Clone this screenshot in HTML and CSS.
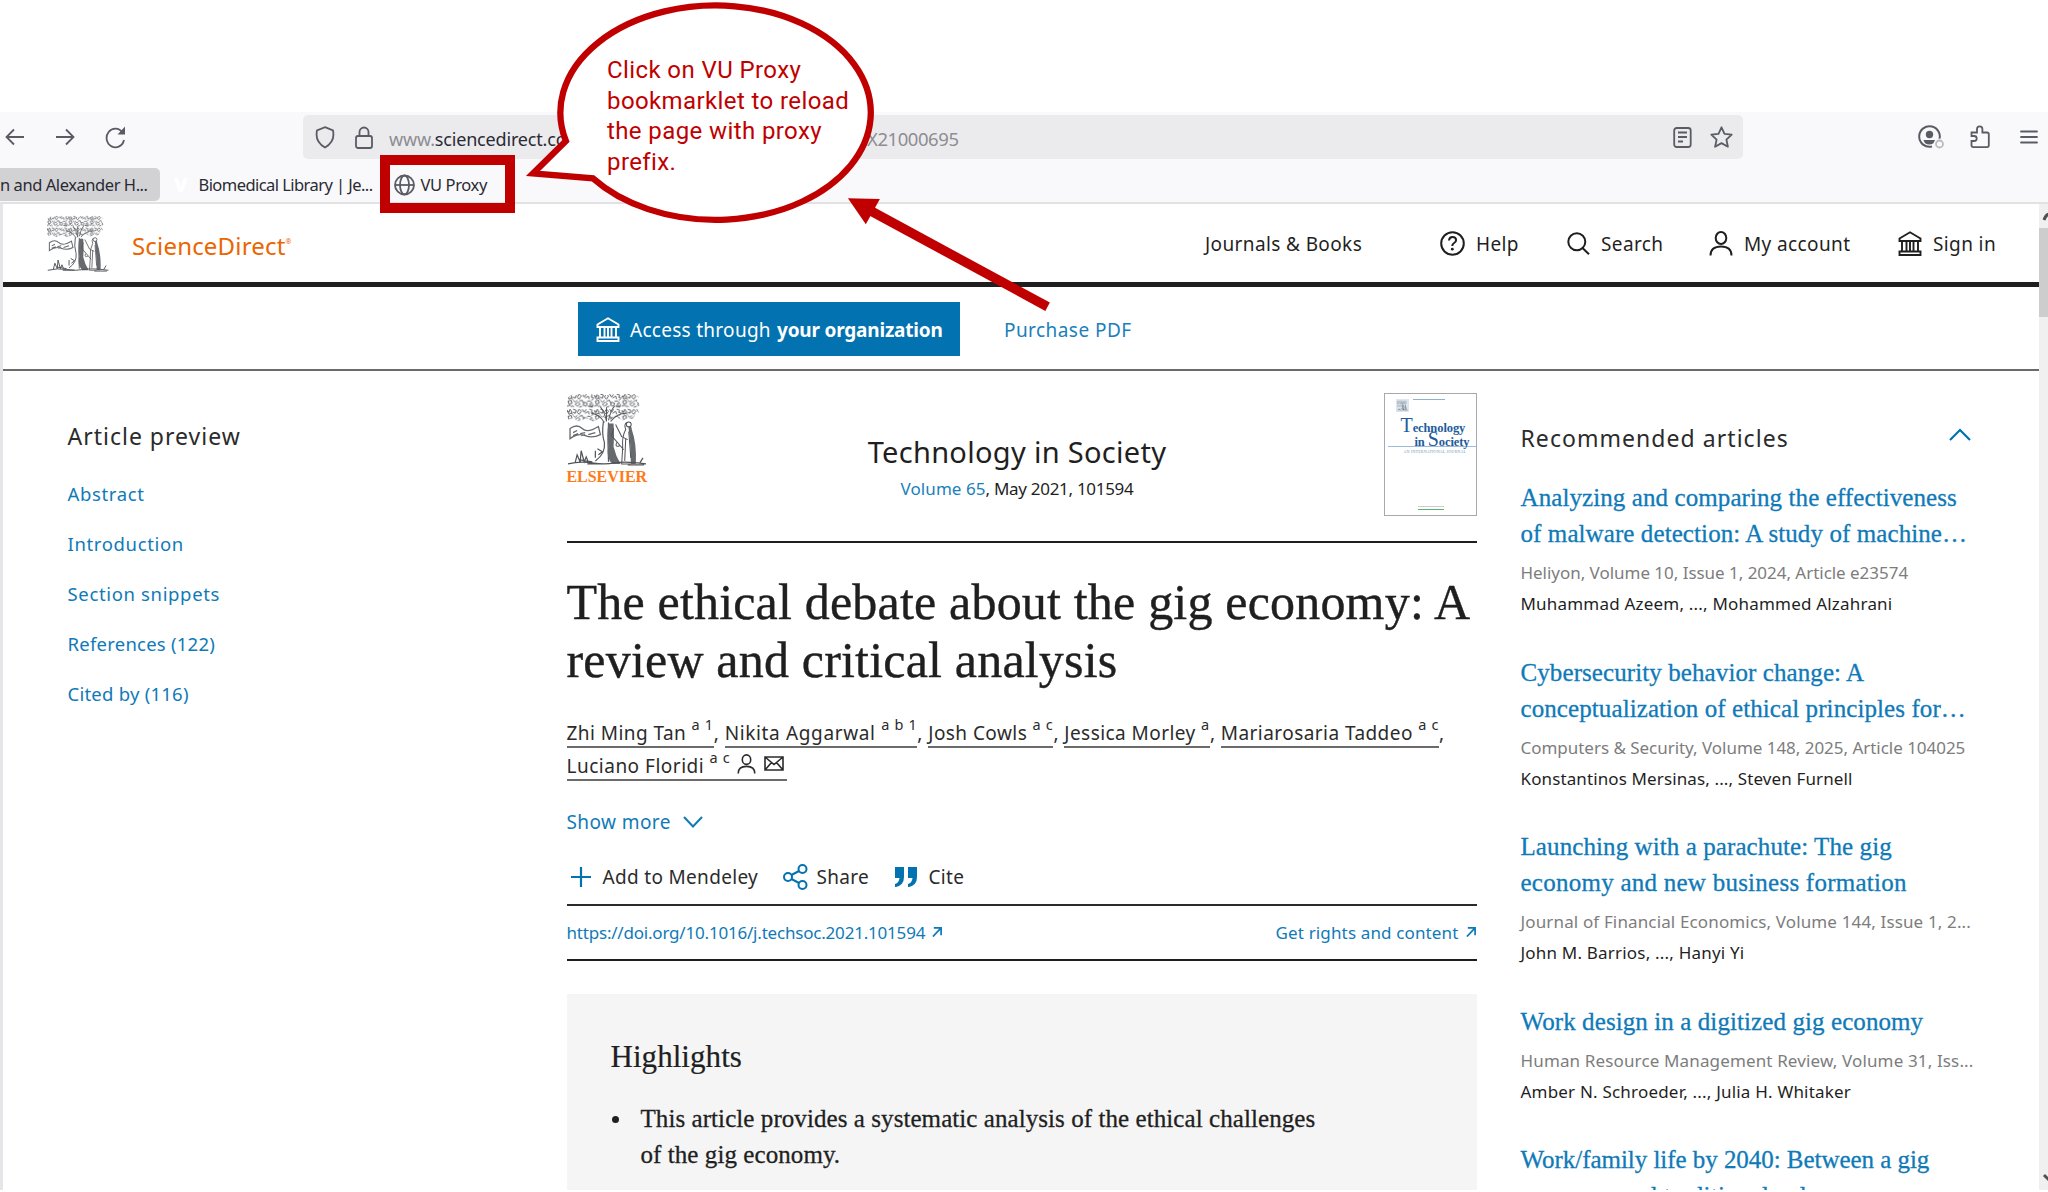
FILE: index.html
```html
<!DOCTYPE html>
<html lang="en">
<head>
<meta charset="utf-8">
<title>The ethical debate about the gig economy: A review and critical analysis</title>
<link rel="stylesheet" href="styles.css">
</head>
<body>
<svg class="defs" width="0" height="0" aria-hidden="true">
  <defs>
    <pattern id="leaves" width="27" height="15" patternUnits="userSpaceOnUse">
      <path d="M0 2l2 2 1-3 2 3-3 2zM6 1l3 1-1 3-2-1M10 4l2-3 2 2-2 3zM15 1l2 3 2-3M18 5l3-2 1 3M22 1l3 1-1 2 3 1M1 8l3-1 1 3-3 1zM6 7l2 2 2-2M8 11l3-2 2 2-3 2zM12 8l3-1 1 3M16 12l1-3 3 1-1 3zM20 8l3 0 2 2-3 1M24 7l2-1M0 13l3-1 2 2M5 12l2 2M12 14l3-1M21 13l3-1 1 2zM26 11l-1 3M4 5l2 1" fill="none" stroke="#505358" stroke-width=".9"/>
    </pattern>
    <symbol id="tree" viewBox="0 0 80 72">
      <path d="M2 4l3-3 3 2 3-3 4 2 4-2 3 3 4-3 5 2 4-2 4 3 4-3 4 2 4-2 3 3 5-3 4 2 4-1 4 3-2 4 3 3-2 4 1 5-4 2-2 4-5-1-5 2-6-3-6 2-9-2-8 4-7-3-7 3-6-3-8 2-6-3-1-4 2-4-3-5 3-3z" fill="url(#leaves)"/>
      <path d="M33 14q4 4 6 14M47 13q-4 4-6 14M24 20q8 1 13 9M58 20q-8 0-15 8M39 14v14" fill="none" stroke="#55585d" stroke-width="1"/>
      <path d="M3 35q7-5 12 0t16-2l2 8q-8 4-15 1T3 45zM6 39l4-2m3 3l5-1m3 2l7-2M6 42l5-2m3 2l4-1" fill="none" stroke="#66696e" stroke-width="1.300"/>
      <path d="M36 28q-2 12 1 21 1 11-9 18M41 29q-1 20 0 39" fill="none" stroke="#55585d" stroke-width="1.2"/>
      <path d="M41 30h5q1 12 0 23 2 9 7 17h-8q-7-6-4-18-2-11 0-22z" fill="#66696e"/>
      <path d="M60 30q4 2 4 6 5 14 4 34h-5q0-20-2-34z" fill="#66696e"/>
      <path d="M59 29q-3 2-1 7-4 7-3 18l-1 16h9M48 31l6 12 6 3M46 35l-2 7M61 38l2 26M58 45l-1 22M49 49q-2 5 3 3M44 42l12 14" fill="none" stroke="#505358" stroke-width="1"/>
      <circle cx="61" cy="31" r="2.4" fill="#fff" stroke="#505358"/>
      <path d="M1 70q12-3 24-1t22 0 31 1M8 69l2-8 3 7 1-11 3 11 2-5 2 5M30 55l5 3-4 3M72 69l3-5M28 57v7M13 66l12 2M20 70h15M60 71h16" fill="none" stroke="#505358" stroke-width="1.2"/>
    </symbol>
    <symbol id="bank" viewBox="0 0 24 25">
      <path d="M1.500 7.500L12 1.300l10.500 6.200V10H1.500zM4 10v10.500M20 10v10.500M8.500 10v10.500M12 10v10.500M15.500 10v10.500M1.500 24v-3.500h21V24z" fill="none" stroke="currentColor" stroke-width="1.900"/>
    </symbol>
    <symbol id="person" viewBox="0 0 24 25">
      <ellipse cx="12" cy="7" rx="5.300" ry="6" fill="none" stroke="currentColor" stroke-width="2"/>
      <path d="M1.500 24.500c0-6 4-9 10.500-9s10.500 3 10.500 9" fill="none" stroke="currentColor" stroke-width="2"/>
    </symbol>
    <symbol id="ext" viewBox="0 0 11 11">
      <path d="M2 1h8v8M10 1L1 10.500" fill="none" stroke="currentColor" stroke-width="1.900"/>
    </symbol>
  </defs>
</svg>

<div class="chrome">
  <div class="toolbar">
    <div class="nav-buttons">
      <svg width="20" height="18" viewBox="0 0 20 18"><path d="M19 9H1.500M9 1.500L1.500 9 9 16.500" class="ln"/></svg>
      <svg width="20" height="18" viewBox="0 0 20 18"><path d="M1 9h17.500M11 1.500L18.500 9 11 16.500" class="ln"/></svg>
      <svg width="21" height="23" viewBox="0 0 21 23"><path d="M17.500 6.500A8.800 9.300 0 1 0 19 14" class="ln"/><path d="M20 .5V8.500h-7.500z" fill="#5b5b66"/></svg>
    </div>
    <div class="urlbar">
      <svg class="shield" width="20" height="23" viewBox="0 0 20 23"><path d="M10 1.200l8 3.300c1.500 7-1 13-8 17-7-4-9.500-10-8-17z" class="ln"/></svg>
      <svg class="lock" width="18" height="23" viewBox="0 0 18 23"><rect x="1" y="10" width="16" height="12" rx="2" class="ln"/><path d="M4.500 10V6a4.500 4.500 0 0 1 9 0v4" class="ln"/></svg>
      <span class="url"><span>www.</span><b>sciencedirect.com</b></span>
      <span class="path">X21000695</span>
      <svg class="reader" width="19" height="21" viewBox="0 0 19 21"><rect x="1.200" y="1" width="16.500" height="19" rx="2.500" class="ln"/><path d="M5 5.500h9M5 10h9M5 14.500h5" class="ln"/></svg>
      <svg class="star" width="23" height="22" viewBox="0 0 23 22"><path d="M11.500 1.300l3 6.600 7.200.8-5.300 4.900 1.500 7.100-6.400-3.600-6.400 3.600 1.500-7.100L1.300 8.700l7.200-.8z" class="ln" stroke-linejoin="round"/></svg>
    </div>
    <div class="tools">
      <svg width="27" height="24" viewBox="0 0 27 24"><path d="M20.500 16.500A10.300 10.300 0 1 0 14 21.500" fill="none" stroke="#5b5b66" stroke-width="2"/><circle cx="11.500" cy="9.500" r="3.700" fill="#5b5b66"/><path d="M5.500 15h11.500q-1 4.500-5.700 4.500T5.500 15z" fill="#5b5b66"/><circle cx="21.500" cy="19" r="5.500" fill="#f9f9fb"/><circle cx="21.500" cy="19" r="3.500" fill="none" stroke="#b9b9c0" stroke-width="1.800"/></svg>
      <svg width="20" height="24" viewBox="0 0 20 24"><path d="M1.500 7.500H7V4a2.700 2.700 0 0 1 5.400 0v3.500h4.600q1.800 0 1.800 1.800v11q0 1.800-1.800 1.800H3.300q-1.800 0-1.800-1.800V16h2.700a2.500 2.500 0 0 0 0-5H1.500z" class="ln"/></svg>
      <svg width="18" height="14" viewBox="0 0 18 14"><path d="M1 1.500h16M1 7h16M1 12.500h16" class="ln" stroke-linecap="round"/></svg>
    </div>
  </div>
  <div class="bookmarks">
    <span class="bm active">n and Alexander H...</span>
    <span class="bm-v">V</span>
    <span class="bm bio">Biomedical Library | Je...</span>
    <svg width="21" height="22" viewBox="0 0 21 22"><g class="ln"><circle cx="10.500" cy="11" r="9.500"/><ellipse cx="10.500" cy="11" rx="4.500" ry="9.500"/><path d="M1 11h19"/></g></svg>
    <span class="bm vu">VU Proxy</span>
  </div>
</div>

<div class="viewport">
  <div class="page">
    <header class="site">
      <svg class="site-tree" width="63" height="57"><use href="#tree"/></svg>
      <span class="brand">ScienceDirect<sup>®</sup></span>
      <nav>
        <a><span>Journals &amp; Books</span></a>
        <a><svg width="25" height="25" viewBox="0 0 25 25"><circle cx="12.500" cy="12.500" r="11.300" fill="none" stroke="currentColor" stroke-width="2"/><path d="M9 9.500q.3-3.500 3.600-3.500t3.500 3q0 1.800-2 3t-1.800 3" fill="none" stroke="currentColor" stroke-width="2"/><circle cx="12.300" cy="18.200" r="1.400" fill="currentColor"/></svg><span>Help</span></a>
        <a class="search"><svg width="23" height="23" viewBox="0 0 23 23"><circle cx="9.800" cy="9.800" r="8.500" fill="none" stroke="currentColor" stroke-width="2"/><path d="M15.500 16l6.500 6.200" stroke="currentColor" stroke-width="2"/></svg><span>Search</span></a>
        <a><svg width="24" height="25"><use href="#person"/></svg><span>My account</span></a>
        <a class="signin"><svg width="24" height="25"><use href="#bank"/></svg><span>Sign in</span></a>
      </nav>
    </header>

    <div class="access">
      <a class="access-btn"><svg width="24" height="25"><use href="#bank"/></svg><span class="thin">Access through</span><strong>your organization</strong></a>
      <a class="purchase">Purchase PDF</a>
    </div>

    <div class="columns">
      <aside class="toc">
        <h2>Article preview</h2>
        <a>Abstract</a>
        <a>Introduction</a>
        <a>Section snippets</a>
        <a class="num">References (122)</a>
        <a class="num">Cited by (116)</a>
      </aside>

      <main>
        <div class="pub">
          <div class="elsevier"><svg width="81" height="73"><use href="#tree"/></svg><span>ELSEVIER</span></div>
          <div class="pub-title">
            <h2>Technology in Society</h2>
            <p><a>Volume 65</a><span>, May 2021, 101594</span></p>
          </div>
          <div class="cover">
            <div class="cover-top"><svg width="13" height="13"><rect width="13" height="13" fill="#dbe6f1"/><use href="#tree" x="1" y="1" width="11" height="11"/></svg><i></i></div>
            <div class="cover-name"><b>T</b>echnology</div>
            <div class="cover-name second">in <b>S</b>ociety</div>
            <div class="cover-line"></div>
            <div class="cover-sub">AN INTERNATIONAL JOURNAL</div>
            <div class="cover-foot"></div>
          </div>
        </div>

        <h1>The ethical debate about the gig economy: A<br>review and critical analysis</h1>

        <div class="authors">
          <div><a>Zhi Ming Tan <sup>a 1</sup></a>, <a class="nik">Nikita Aggarwal <sup>a b 1</sup></a>, <a>Josh Cowls <sup>a c</sup></a>, <a>Jessica Morley <sup>a</sup></a>, <a>Mariarosaria Taddeo <sup>a c</sup></a>,</div>
          <div><a class="luc">Luciano Floridi <sup>a c</sup> <svg width="19" height="20" viewBox="0 0 24 25"><use href="#person"/></svg> <svg class="mail" width="20" height="15" viewBox="0 0 20 15"><path d="M1 1h18v13H1zM1 1l9 7.500L19 1M1 14l6.500-7.500M19 14l-6.500-7.500" fill="none" stroke="currentColor" stroke-width="1.600"/></svg></a></div>
        </div>

        <a class="more">Show more <svg width="20" height="12" viewBox="0 0 20 12"><path d="M1 1l9 9.500L19 1" fill="none" stroke="currentColor" stroke-width="2"/></svg></a>

        <div class="actions">
          <svg class="plus" width="20" height="20" viewBox="0 0 20 20"><path d="M10 0v20M0 10h20" stroke="currentColor" stroke-width="2.200"/></svg><span class="add">Add to Mendeley</span>
          <svg width="25" height="26" viewBox="0 0 25 26"><g fill="none" stroke="currentColor" stroke-width="2"><circle cx="5" cy="13" r="4"/><circle cx="19.500" cy="5" r="4"/><circle cx="19.500" cy="21" r="4"/><path d="M8.500 11L16 7M8.500 15l7.500 4"/></g></svg><span class="share">Share</span>
          <svg width="24" height="20" viewBox="0 0 24 20"><path d="M1 0h9v10q0 8-8 10H1v-3q4-1 4.500-6H1zM14 0h9v10q0 8-8 10h-1v-3q4-1 4.500-6H14z" fill="currentColor"/></svg><span class="cite">Cite</span>
        </div>

        <div class="doi">
          <a><span class="doi-url">https://doi.org/10.1016/j.techsoc.2021.101594</span><svg width="10" height="10" viewBox="0 0 11 11"><use href="#ext"/></svg></a>
          <a><span>Get rights and content</span><svg width="10" height="10" viewBox="0 0 11 11"><use href="#ext"/></svg></a>
        </div>

        <section class="highlights">
          <h2>Highlights</h2>
          <div class="point"><span class="dot"></span><p>This article provides a systematic analysis of the ethical challenges<br>of the gig economy.</p></div>
        </section>
      </main>

      <aside class="rec">
        <div class="rec-head"><h2>Recommended articles</h2><svg width="22" height="13" viewBox="0 0 22 13"><path d="M1 12l10-10 10 10" fill="none" stroke="currentColor" stroke-width="2.200"/></svg></div>
        <article><h3>Analyzing and comparing the effectiveness<br>of malware detection: A study of machine…</h3><p class="meta">Heliyon, Volume 10, Issue 1, 2024, Article e23574</p><p>Muhammad Azeem, ..., Mohammed Alzahrani</p></article>
        <article><h3>Cybersecurity behavior change: A<br>conceptualization of ethical principles for…</h3><p class="meta">Computers &amp; Security, Volume 148, 2025, Article 104025</p><p class="snug">Konstantinos Mersinas, ..., Steven Furnell</p></article>
        <article><h3>Launching with a parachute: The gig<br><span class="loose">economy and new business formation</span></h3><p class="meta wide">Journal of Financial Economics, Volume 144, Issue 1, 2...</p><p>John M. Barrios, ..., Hanyi Yi</p></article>
        <article><h3>Work design in a digitized gig economy</h3><p class="meta wide">Human Resource Management Review, Volume 31, Iss...</p><p>Amber N. Schroeder, ..., Julia H. Whitaker</p></article>
        <article><h3 class="tight">Work/family life by 2040: Between a gig<br><span class="loose">economy and traditional values</span></h3></article>
      </aside>
    </div>
  </div>
  <div class="scrollbar">
    <svg width="9" height="24" viewBox="0 0 9 24"><path d="M5 16q2-6 6-6" fill="none" stroke="#505050" stroke-width="3"/></svg>
    <div class="thumb"></div>
    <svg width="9" height="20" viewBox="0 0 9 20"><path d="M5 5l6 6" stroke="#505050" stroke-width="3"/></svg>
  </div>
</div>

<div class="frame-mark"></div>
<svg class="marks" width="2048" height="330" viewBox="0 0 2048 330">
  <path d="M565.900 141L533 173.500 593 178.400A155.200 107.200 0 1 0 565.900 141z" fill="#fff" stroke="#c00000" stroke-width="6.300"/>
  <path d="M1047.600 306.700L871 211" stroke="#c00000" stroke-width="9.500"/>
  <path d="M847.900 198.300l32 .7-14.100 25.300z" fill="#c00000"/>
</svg>
<div class="callout">Click on VU Proxy<br>bookmarklet to reload<br>the page with proxy<br>prefix.</div>
</body>
</html>
```
FILE: styles.css
```css
* { box-sizing: border-box; }
body {
  margin: 0;
  padding-top: 112px;
  height: 1192px;
  overflow: hidden;
  background: #fff;
  color: #1f1f1f;
  font-family: "Noto Sans", sans-serif;
  position: relative;
}
h1, h2, h3, p { margin: 0; font-weight: 400; }
svg { display: block; flex: none; }
.defs { position: absolute; }
.ln { fill: none; stroke: #5b5b66; stroke-width: 1.8; }

/* Browser chrome */
.chrome { height: 92px; background: #f9f9fb; border-bottom: 2px solid #e2e2e5; }
.toolbar { display: flex; align-items: center; height: 50px; }
.nav-buttons { display: flex; align-items: center; gap: 30px; width: 303px; padding-left: 5px; }
.urlbar {
  display: flex; align-items: center;
  width: 1440px; height: 44px;
  padding: 0 10px 0 12px;
  background: #ebebee; border-radius: 5px;
  font-size: 18px; letter-spacing: -.18px; color: #8d8d92;
}
.lock { margin-left: 20px; }
.url { margin-left: 16px; padding-top: 3px; width: 478px; }
.url b { font-weight: 400; color: #2a2a33; }
.path { padding-top: 2px; font-size: 18.5px; letter-spacing: -.44px; }
.reader { margin-left: auto; }
.star { margin-left: 18px; }
.tools { display: flex; align-items: center; gap: 25px; padding-left: 175px; }
.tools svg:last-child { margin-left: 5px; }
.bookmarks { display: flex; align-items: center; height: 41px; padding-top: 4px; font-size: 16.5px; }
.bm { white-space: nowrap; letter-spacing: -.56px; color: #2a2a33; }
.active { width: 160px; height: 33px; line-height: 34px; background: #d2d2d5; border-radius: 0 5px 5px 0; letter-spacing: -.44px; }
.bm-v { width: 38.5px; padding-left: 14px; font: 800 20px "Noto Sans", sans-serif; color: #fff; }
.bio { width: 195.5px; }
.vu { margin-left: 5.5px; letter-spacing: -.38px; }

/* Page viewport */
.viewport { display: flex; height: 986px; }
.page { width: 2039px; border-left: 3px solid #e6e6e9; overflow: hidden; }
.site { display: flex; align-items: center; height: 83px; border-bottom: 5px solid #1f1f1f; font-size: 19px; }
.site-tree { margin-left: 44px; }
.brand { margin-left: 22px; padding-top: 5px; width: 1073px; font-size: 24px; letter-spacing: .18px; color: #eb6500; }
.brand sup { font-size: 7px; vertical-align: 11px; line-height: 0; }
.site nav { display: grid; grid-template-columns: 235px 127px 142px 189px 110px; letter-spacing: .38px; }
.site nav a { display: flex; align-items: center; gap: 11px; white-space: nowrap; }
.site nav span { padding-top: 2px; }
.access { display: flex; align-items: center; height: 84px; padding: 2px 0 0 575px; border-bottom: 2px solid #6b6b6b; font-size: 19px; letter-spacing: .28px; }
.access-btn { display: flex; align-items: center; width: 382px; height: 54px; padding-left: 18px; background: #0272b1; color: #fff; }
.access-btn span, .access-btn strong, .purchase { padding-top: 1px; }
.thin { margin-left: 10px; width: 147px; }
.access strong { letter-spacing: -.2px; }
.purchase { margin-left: 44px; letter-spacing: .44px; color: #1a7fbb; }

.columns { display: grid; grid-template-columns: 563.5px 910px 1fr; }

.toc { padding: 50px 0 0 64.5px; color: #0f7ab8; }
.toc h2 { height: 30px; margin-bottom: 18px; font-size: 23px; line-height: 30px; letter-spacing: 1px; color: #2b2b2b; }
.toc a { display: block; font-size: 18.5px; line-height: 50px; letter-spacing: .65px; }
.toc .num { letter-spacing: .24px; }

.pub { display: grid; grid-template-columns: 84px 1fr 93px; height: 172px; padding-top: 22px; border-bottom: 2px solid #1f1f1f; }
.elsevier span { display: block; margin-top: 1px; font: 700 16px/20px "Liberation Serif", serif; letter-spacing: -.05px; color: #ff7a1a; }
.pub-title { padding-top: 39px; text-align: center; }
.pub-title h2 { font-size: 29px; line-height: 40px; letter-spacing: .3px; }
.pub-title p { margin-top: 4px; font-size: 17px; line-height: 26px; letter-spacing: -.3px; }
.pub-title a { letter-spacing: .07px; color: #1a7fbb; }

.cover { height: 123px; border: 1px solid #a9a9a9; font-family: "Liberation Serif", serif; color: #1d5c9b; }
.cover-top { display: flex; gap: 4px; height: 20px; padding: 5px 0 0 11px; }
.cover-top i { width: 32px; height: 1px; background: #8fb0d0; }
.cover-name { height: 14px; margin-top: 4px; padding-left: 16px; font: 700 12.5px/14px "Liberation Serif", serif; letter-spacing: -.1px; white-space: nowrap; }
.cover-name b { font-size: 20px; font-weight: 400; line-height: 14px; }
.cover-name.second { margin-top: 0; padding-left: 30px; }
.cover-line { height: 1px; margin: 0 0 0 3px; background: #9bbbd9; }
.cover-sub { margin: 2px 0 0 19px; font-size: 4px; line-height: 5px; letter-spacing: .2px; color: #6e98c2; }
.cover-foot { width: 26px; height: 4px; margin: 52px auto 0 33px; border-top: 1px solid #ccc; border-bottom: 1px solid #59b36d; }

h1 { padding-top: 30px; font: 400 50px/58px "Liberation Serif", serif; letter-spacing: .19px; white-space: nowrap; -webkit-text-stroke: .4px #1f1f1f; }
.authors { margin-top: 28px; font-size: 19px; line-height: 32.7px; letter-spacing: .44px; white-space: nowrap; color: #2b2b2b; }
.authors a { border-bottom: 2px solid #6b6b6b; }
.authors .nik { letter-spacing: .64px; }
.authors sup { font-size: 14.5px; line-height: 0; vertical-align: 10px; letter-spacing: .65px; }
.authors svg { display: inline-block; vertical-align: -1px; }
.authors .luc { letter-spacing: .5px; padding-right: 3px; }
.authors .luc svg { margin-left: 1px; }
.authors .luc .mail { vertical-align: 2px; margin-left: 3px; }
.more { display: flex; align-items: center; gap: 12px; height: 30px; margin-top: 25px; font-size: 19px; letter-spacing: .42px; color: #0f7ab8; }
.actions { display: flex; align-items: center; height: 69px; padding: 13px 0 1px 4px; border-bottom: 2px solid #2b2b2b; font-size: 19px; letter-spacing: .32px; color: #0272b1; }
.actions span { color: #2b2b2b; }
.add { margin-left: 12px; width: 180px; }
.share { margin-left: 9px; width: 77px; }
.cite { margin-left: 11px; }
.doi { display: flex; justify-content: space-between; align-items: center; height: 55px; padding-bottom: 1px; border-bottom: 2px solid #1f1f1f; font-size: 17px; letter-spacing: .14px; color: #0f7ab8; }
.doi a { display: flex; align-items: center; gap: 7px; }
.doi a:last-child { margin-right: 1px; }
.doi-url { letter-spacing: -.2px; }
.highlights { height: 230px; margin-top: 33px; padding: 43px 0 0 44px; background: #f5f5f5; font-family: "Liberation Serif", serif; }
.highlights h2 { height: 64px; font-size: 31px; line-height: 40px; letter-spacing: .05px; -webkit-text-stroke: .2px #1f1f1f; }
.point { display: flex; font-size: 25px; line-height: 36px; letter-spacing: .07px; white-space: nowrap; -webkit-text-stroke: .3px #1f1f1f; }
.dot { width: 7px; height: 7px; margin: 15px 22px 0 1px; border-radius: 50%; background: #1f1f1f; }

.rec { padding: 52px 0 0 44px; white-space: nowrap; }
.rec-head { display: flex; justify-content: space-between; width: 450px; height: 57px; color: #0272b1; }
.rec-head h2 { font-size: 23px; line-height: 30px; letter-spacing: 1.05px; color: #2b2b2b; }
.rec-head svg { margin-top: 5px; }
.rec h3 { margin-bottom: 5px; font: 400 25px/36px "Liberation Serif", serif; letter-spacing: .09px; color: #0f7ab8; -webkit-text-stroke: .3px #0f7ab8; }
.rec h3.tight { letter-spacing: -.04px; }
.rec .loose { letter-spacing: .25px; }
.rec article { margin-bottom: 35.6px; }
.rec p { font-size: 17px; line-height: 31px; letter-spacing: .2px; }
.rec p.snug { letter-spacing: .12px; }
.rec p.meta { letter-spacing: -.03px; color: #7d7d7d; }
.rec p.meta.wide { letter-spacing: .14px; }

.scrollbar { width: 9px; background: #f0f0f0; display: flex; flex-direction: column; }
.thumb { height: 89px; margin-bottom: auto; background: #cdcdcd; }

/* Annotations drawn over the page */
.frame-mark { position: absolute; left: 380px; top: 155px; width: 135px; height: 58px; border: 10px solid #c00000; }
.marks { position: absolute; left: 0; top: 0; }
.callout { position: absolute; left: 607px; top: 55px; font: 400 24px/30.7px Roboto, sans-serif; letter-spacing: .4px; color: #c00000; white-space: nowrap; }
```
